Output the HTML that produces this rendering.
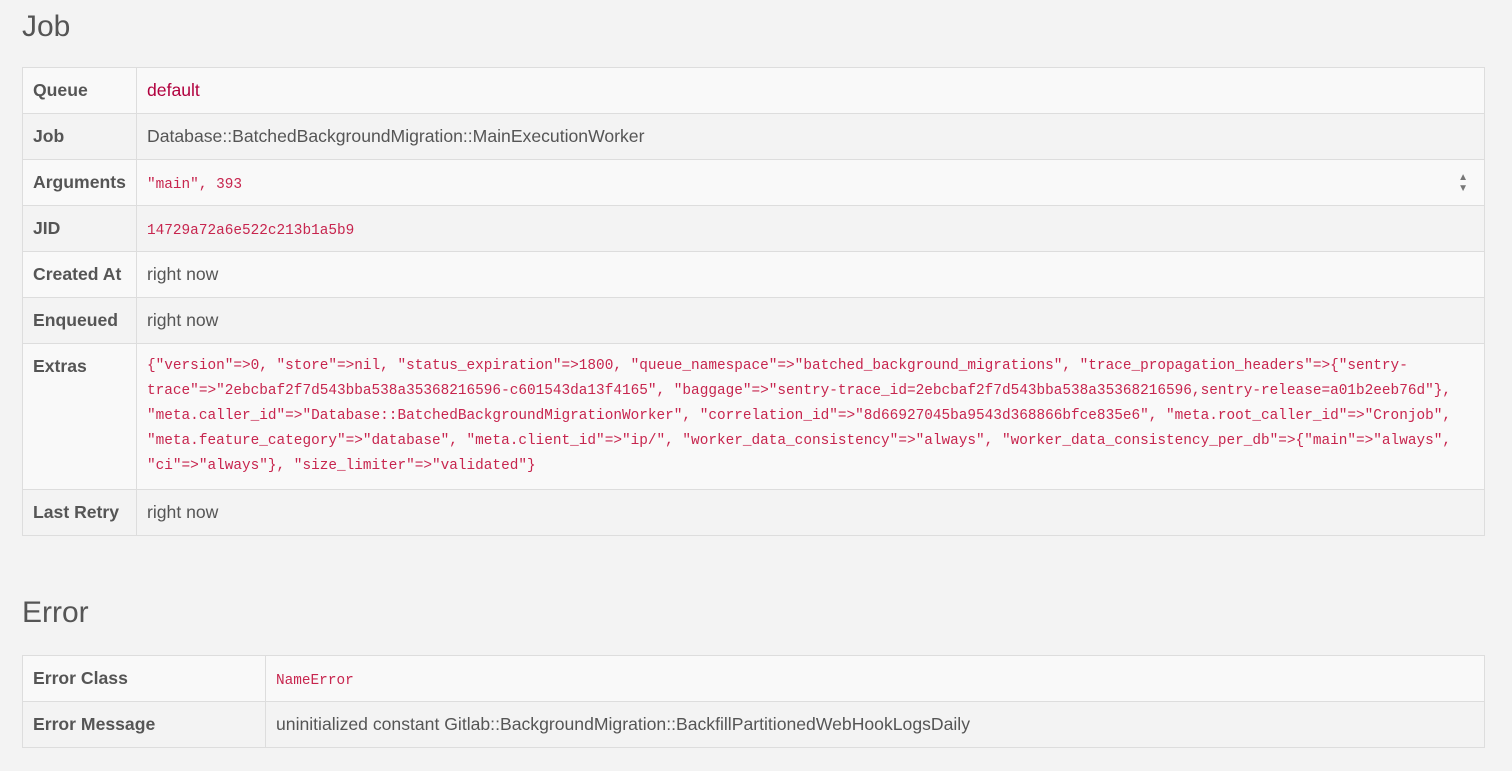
<!DOCTYPE html>
<html><head><meta charset="utf-8"><style>
body{margin:0;background:#f3f3f3;font-family:"Liberation Sans",sans-serif;color:#555;font-size:17.6px;}
.wrap{padding:0 27px 0 22px;}
h3{font-weight:normal;font-size:30px;margin:0;line-height:1;}
table{border-collapse:collapse;width:100%;}
td,th{border:1px solid #ddd;padding:0 10px;height:45px;text-align:left;vertical-align:middle;}
th{font-weight:bold;color:#555;}
tr:nth-child(odd){background:#f9f9f9;}
code{font-family:"Liberation Mono",monospace;font-size:14.4px;color:#c7254e;}
.ex{white-space:pre;padding:10px 10px 10px;vertical-align:top;height:auto;}
.ex code{display:block;line-height:25px;}
.exh{vertical-align:top;padding-top:12px;}
</style></head><body><div class="wrap">
<h3 style="position:absolute;top:12px;left:22px">Job</h3>
<table style="position:absolute;top:67px;left:22px;width:1463px">
<tr><th style="width:93px">Queue</th><td style="color:#b1003e">default</td></tr>
<tr><th>Job</th><td>Database::BatchedBackgroundMigration::MainExecutionWorker</td></tr>
<tr><th>Arguments</th><td style="position:relative"><code>"main", 393</code><span style="position:absolute;right:16px;top:12px;color:#777;font-size:10px;line-height:11px">▲<br>▼</span></td></tr>
<tr><th>JID</th><td><code>14729a72a6e522c213b1a5b9</code></td></tr>
<tr><th>Created At</th><td>right now</td></tr>
<tr><th>Enqueued</th><td>right now</td></tr>
<tr><th class="exh">Extras</th><td class="ex"><code>{"version"=&gt;0, "store"=&gt;nil, "status_expiration"=&gt;1800, "queue_namespace"=&gt;"batched_background_migrations", "trace_propagation_headers"=&gt;{"sentry-
trace"=&gt;"2ebcbaf2f7d543bba538a35368216596-c601543da13f4165", "baggage"=&gt;"sentry-trace_id=2ebcbaf2f7d543bba538a35368216596,sentry-release=a01b2eeb76d"},
"meta.caller_id"=&gt;"Database::BatchedBackgroundMigrationWorker", "correlation_id"=&gt;"8d66927045ba9543d368866bfce835e6", "meta.root_caller_id"=&gt;"Cronjob",
"meta.feature_category"=&gt;"database", "meta.client_id"=&gt;"ip/", "worker_data_consistency"=&gt;"always", "worker_data_consistency_per_db"=&gt;{"main"=&gt;"always",
"ci"=&gt;"always"}, "size_limiter"=&gt;"validated"}</code></td></tr>
<tr><th>Last Retry</th><td>right now</td></tr>
</table>
<h3 style="position:absolute;top:598px;left:22px">Error</h3>
<table style="position:absolute;top:655px;left:22px;width:1463px">
<tr><th style="width:222px">Error Class</th><td><code>NameError</code></td></tr>
<tr><th>Error Message</th><td>uninitialized constant Gitlab::BackgroundMigration::BackfillPartitionedWebHookLogsDaily</td></tr>
</table>
</div></body></html>
